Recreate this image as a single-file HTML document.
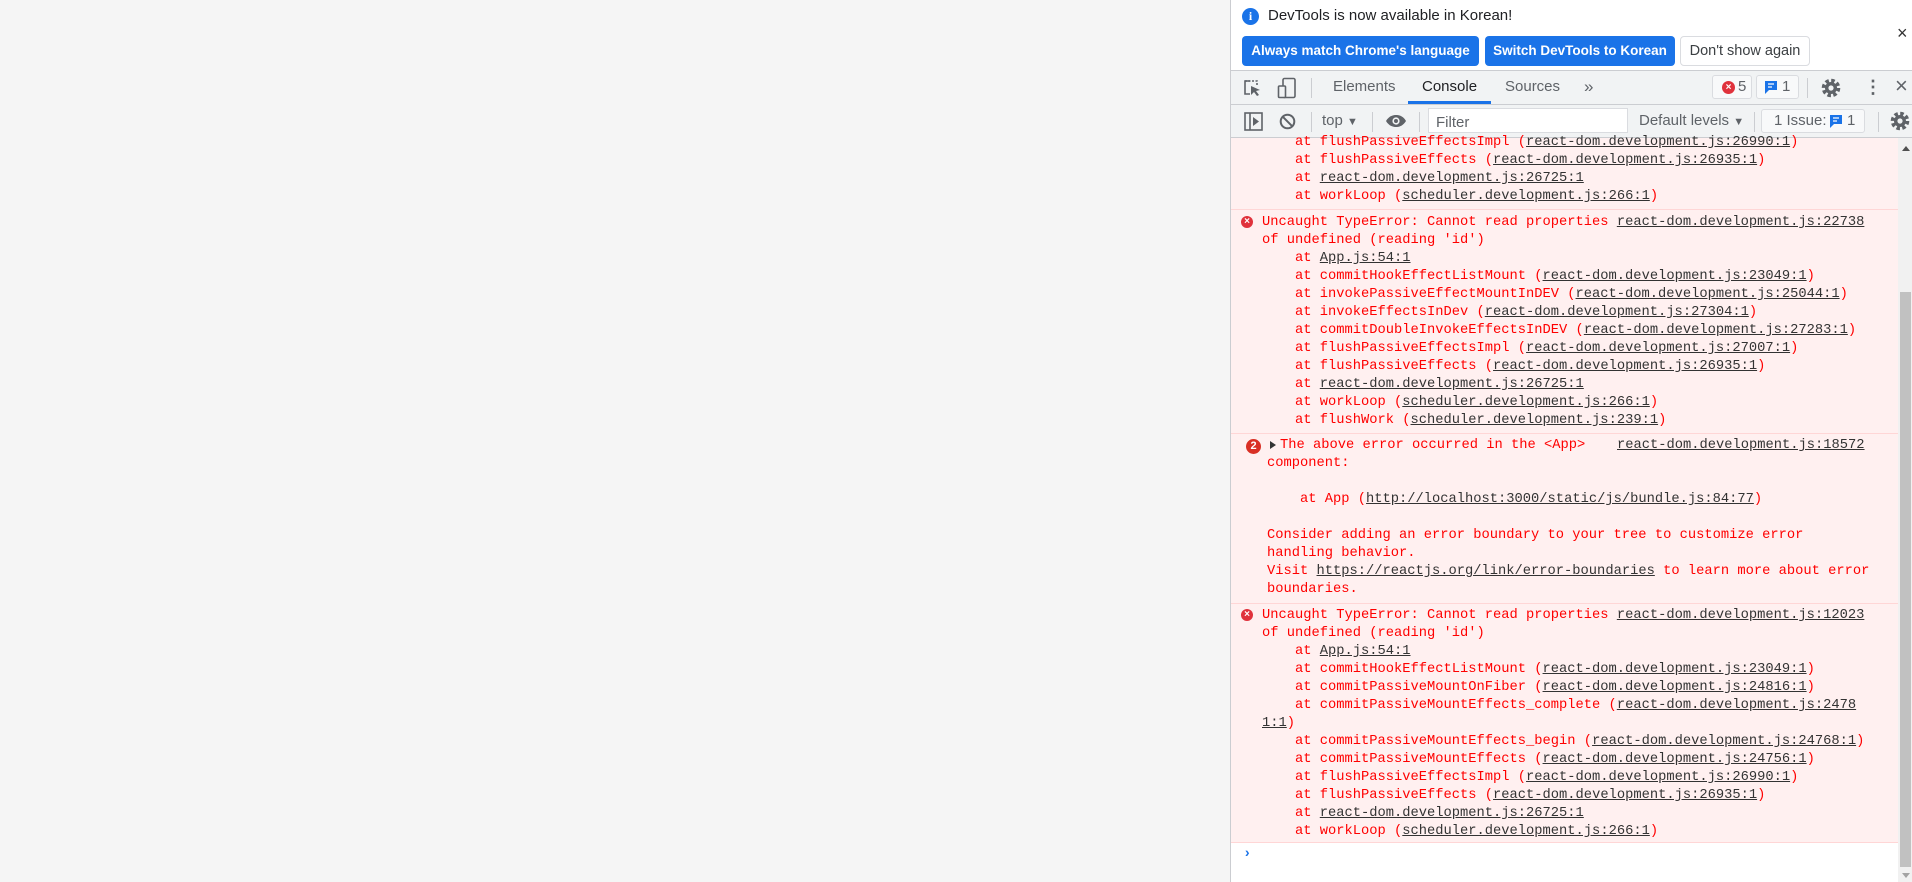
<!DOCTYPE html>
<html><head><meta charset="utf-8">
<style>
*{margin:0;padding:0;box-sizing:border-box}
body{width:1912px;height:882px;position:relative;overflow:hidden;background:#f5f5f5;font-family:"Liberation Sans",sans-serif}
.dt{position:absolute;left:1230px;top:0;width:682px;height:882px;background:#fff;border-left:1px solid #cbcdd1}
.a{position:absolute}
.btn{position:absolute;top:36px;height:30px;border-radius:4px;font-size:13.5px;font-weight:bold;color:#fff;background:#1a73e8;line-height:30px;text-align:center;white-space:nowrap;overflow:hidden}
.tb{position:absolute;left:0;width:682px;background:#f1f3f4;border-bottom:1px solid #cbcdd1}
.sep{position:absolute;width:1px;background:#cbcdd1}
.tab{position:absolute;top:78px;font-size:15px;color:#5f6368;line-height:18px}
.blk{position:absolute;left:0;width:667px;background:#fff0f0;border-top:1px solid #ffd6d6}
.ln{position:absolute;white-space:pre;font-family:"Liberation Mono",monospace;font-size:13.75px;line-height:18px;color:#f00}
.l{color:#333;text-decoration:underline}
.ei{position:absolute;width:12px;height:12px;border-radius:50%;background:#e0323c;color:#fff;font-size:10px;line-height:12px;text-align:center;font-weight:bold}
</style></head><body>
<div class="dt">
 <div class="a" style="left:11px;top:8px;width:17px;height:17px;border-radius:50%;background:#1a73e8;color:#fff;font:bold 12px/17px 'Liberation Serif',serif;text-align:center">i</div>
 <div class="a" style="left:37px;top:7px;font-size:15px;color:#202124;line-height:18px">DevTools is now available in Korean!</div>
 <div class="btn" style="left:11px;width:237px">Always match Chrome's language</div>
 <div class="btn" style="left:254px;width:190px">Switch DevTools to Korean</div>
 <div class="btn" style="left:449px;width:130px;background:#fff;color:#3c4043;font-weight:normal;border:1px solid #dadce0;font-size:14.5px;line-height:28px">Don't show again</div>
 <div class="a" style="left:666px;top:23px;font-size:18px;color:#333">×</div>
 <div class="tb" style="top:70px;height:35px;border-top:1px solid #cbcdd1"></div>
 <svg class="a" style="left:11px;top:78px" width="20" height="20" viewBox="0 0 20 20"><path d="M8 3H3v13h5" fill="none" stroke="#5f6368" stroke-width="1.6"/><path d="M3 3h12v5" fill="none" stroke="#5f6368" stroke-width="1.6" stroke-dasharray="2 1.5"/><path d="M9 8l9 4-4 1 3 4-2 1-3-4-3 3z" fill="#5f6368"/></svg>
 <svg class="a" style="left:46px;top:77px" width="20" height="22" viewBox="0 0 20 22"><rect x="6" y="1.5" width="12" height="19" rx="1.5" fill="none" stroke="#5f6368" stroke-width="1.6"/><rect x="1.5" y="9" width="7" height="11.5" rx="1" fill="#f1f3f4" stroke="#5f6368" stroke-width="1.6"/></svg>
 <div class="sep" style="left:80px;top:78px;height:20px"></div>
 <div class="tab" style="left:102px">Elements</div>
 <div class="tab" style="left:191px;color:#202124">Console</div>
 <div class="a" style="left:177px;top:101px;width:83px;height:3px;background:#1a73e8"></div>
 <div class="tab" style="left:274px">Sources</div>
 <div class="tab" style="left:353px;font-size:17px">»</div>
 <div class="a" style="left:481px;top:75px;width:40px;height:24px;border:1px solid #dadce0;border-radius:3px;background:#f8f9fa"></div>
 <div class="ei" style="left:491px;top:81px;width:13px;height:13px;line-height:13px">×</div>
 <div class="a" style="left:507px;top:78px;font-size:15px;color:#5f6368">5</div>
 <div class="a" style="left:525px;top:75px;width:43px;height:24px;border:1px solid #dadce0;border-radius:3px;background:#f8f9fa"></div>
 <svg class="a" style="left:533px;top:80px" width="14" height="15" viewBox="0 0 14 15"><path d="M1 1h12v9H5l-4 4z" fill="#1a73e8"/><path d="M4 4h6M4 7h4" stroke="#fff" stroke-width="1.3"/></svg>
 <div class="a" style="left:551px;top:78px;font-size:15px;color:#5f6368">1</div>
 <div class="sep" style="left:576px;top:78px;height:20px"></div>
 <svg class="a" style="left:590px;top:78px" width="20" height="20" viewBox="0 0 20 20"><circle cx="10" cy="10" r="7.3" fill="none" stroke="#5f6368" stroke-width="4" stroke-dasharray="3.4 2.33"/><circle cx="10" cy="10" r="6" fill="#5f6368"/><circle cx="10" cy="10" r="2.6" fill="#f1f3f4"/></svg>
 <div class="a" style="left:633px;top:76px;font-size:18px;color:#5f6368;line-height:22px;font-weight:bold">⋮</div>
 <div class="a" style="left:664px;top:75px;font-size:22px;color:#5f6368;line-height:22px">×</div>
 <div class="tb" style="top:105px;height:33px"></div>
 <svg class="a" style="left:13px;top:112px" width="20" height="19" viewBox="0 0 20 19"><rect x="1" y="1" width="17" height="17" fill="none" stroke="#5f6368" stroke-width="1.6"/><path d="M6 1v17" stroke="#5f6368" stroke-width="1.6"/><path d="M9 5l6 4.5-6 4.5z" fill="#5f6368"/></svg>
 <svg class="a" style="left:48px;top:113px" width="17" height="17" viewBox="0 0 17 17"><circle cx="8.5" cy="8.5" r="6.8" fill="none" stroke="#5f6368" stroke-width="2"/><path d="M3.7 3.7l9.6 9.6" stroke="#5f6368" stroke-width="2"/></svg>
 <div class="sep" style="left:80px;top:112px;height:20px"></div>
 <div class="a" style="left:91px;top:112px;font-size:15px;color:#5f6368">top <span style="font-size:11px">▼</span></div>
 <div class="sep" style="left:141px;top:112px;height:20px"></div>
 <svg class="a" style="left:154px;top:114px" width="22" height="14" viewBox="0 0 22 14"><path d="M1 7C4 2 8 1 11 1s7 1 10 6c-3 5-7 6-10 6S4 12 1 7z" fill="#5f6368"/><circle cx="11" cy="7" r="3.6" fill="#f1f3f4"/><circle cx="11" cy="7" r="2" fill="#5f6368"/></svg>
 <div class="sep" style="left:188px;top:112px;height:20px"></div>
 <div class="a" style="left:197px;top:108px;width:200px;height:25px;background:#fff;border:1px solid #dadce0"></div>
 <div class="a" style="left:205px;top:114px;font-size:15px;color:#5f6368">Filter</div>
 <div class="a" style="left:408px;top:112px;font-size:15px;color:#5f6368">Default levels <span style="font-size:11px">▼</span></div>
 <div class="sep" style="left:523px;top:112px;height:20px"></div>
 <div class="a" style="left:530px;top:109px;width:104px;height:24px;border:1px solid #dadce0;border-radius:3px;background:#f8f9fa"></div>
 <div class="a" style="left:543px;top:112px;font-size:15px;color:#5f6368">1 Issue:</div>
 <svg class="a" style="left:598px;top:114px" width="14" height="15" viewBox="0 0 14 15"><path d="M1 1h12v9H5l-4 4z" fill="#1a73e8"/><path d="M4 4h6M4 7h4" stroke="#fff" stroke-width="1.3"/></svg>
 <div class="a" style="left:616px;top:112px;font-size:15px;color:#5f6368">1</div>
 <div class="sep" style="left:647px;top:112px;height:20px"></div>
 <svg class="a" style="left:659px;top:111px" width="20" height="20" viewBox="0 0 20 20"><circle cx="10" cy="10" r="7.3" fill="none" stroke="#5f6368" stroke-width="4" stroke-dasharray="3.4 2.33"/><circle cx="10" cy="10" r="6" fill="#5f6368"/><circle cx="10" cy="10" r="2.6" fill="#f1f3f4"/></svg>

 <div class="blk" style="top:138px;height:71px;border-top:none"></div>
 <div class="blk" style="top:209px;height:224px"></div>
 <div class="blk" style="top:433px;height:170px"></div>
 <div class="blk" style="top:603px;height:240px;border-bottom:1px solid #ffd6d6"></div>

 <div class="ln" style="left:64px;top:134px">at flushPassiveEffectsImpl (<span class="l">react-dom.development.js:26990:1</span>)
at flushPassiveEffects (<span class="l">react-dom.development.js:26935:1</span>)
at <span class="l">react-dom.development.js:26725:1</span>
at workLoop (<span class="l">scheduler.development.js:266:1</span>)</div>

 <div class="ei" style="left:10px;top:216px">×</div>
 <div class="ln" style="left:31px;top:214px">Uncaught TypeError: Cannot read properties <span class="l">react-dom.development.js:22738</span>
of undefined (reading 'id')</div>
 <div class="ln" style="left:64px;top:250px">at <span class="l">App.js:54:1</span>
at commitHookEffectListMount (<span class="l">react-dom.development.js:23049:1</span>)
at invokePassiveEffectMountInDEV (<span class="l">react-dom.development.js:25044:1</span>)
at invokeEffectsInDev (<span class="l">react-dom.development.js:27304:1</span>)
at commitDoubleInvokeEffectsInDEV (<span class="l">react-dom.development.js:27283:1</span>)
at flushPassiveEffectsImpl (<span class="l">react-dom.development.js:27007:1</span>)
at flushPassiveEffects (<span class="l">react-dom.development.js:26935:1</span>)
at <span class="l">react-dom.development.js:26725:1</span>
at workLoop (<span class="l">scheduler.development.js:266:1</span>)
at flushWork (<span class="l">scheduler.development.js:239:1</span>)</div>

 <div class="a" style="left:15px;top:439px;width:15px;height:15px;border-radius:50%;background:#d93025;color:#fff;font:bold 11px/15px 'Liberation Sans',sans-serif;text-align:center">2</div>
 <div class="a" style="left:39px;top:441px;width:0;height:0;border-left:6px solid #333;border-top:4px solid transparent;border-bottom:4px solid transparent"></div>
 <div class="ln" style="left:49px;top:437px">The above error occurred in the &lt;App&gt;</div>
 <div class="ln" style="left:386px;top:437px"><span class="l">react-dom.development.js:18572</span></div>
 <div class="ln" style="left:36px;top:455px">component:

    at App (<span class="l">http://localhost:3000/static/js/bundle.js:84:77</span>)

Consider adding an error boundary to your tree to customize error
handling behavior.
Visit <span class="l">https://reactjs.org/link/error-boundaries</span> to learn more about error
boundaries.</div>

 <div class="ei" style="left:10px;top:609px">×</div>
 <div class="ln" style="left:31px;top:607px">Uncaught TypeError: Cannot read properties <span class="l">react-dom.development.js:12023</span>
of undefined (reading 'id')</div>
 <div class="ln" style="left:64px;top:643px">at <span class="l">App.js:54:1</span>
at commitHookEffectListMount (<span class="l">react-dom.development.js:23049:1</span>)
at commitPassiveMountOnFiber (<span class="l">react-dom.development.js:24816:1</span>)
at commitPassiveMountEffects_complete (<span class="l">react-dom.development.js:2478</span></div>
 <div class="ln" style="left:31px;top:715px"><span class="l">1:1</span>)</div>
 <div class="ln" style="left:64px;top:733px">at commitPassiveMountEffects_begin (<span class="l">react-dom.development.js:24768:1</span>)
at commitPassiveMountEffects (<span class="l">react-dom.development.js:24756:1</span>)
at flushPassiveEffectsImpl (<span class="l">react-dom.development.js:26990:1</span>)
at flushPassiveEffects (<span class="l">react-dom.development.js:26935:1</span>)
at <span class="l">react-dom.development.js:26725:1</span>
at workLoop (<span class="l">scheduler.development.js:266:1</span>)</div>

 <div class="a" style="left:12px;top:845px;color:#1a73e8;font:bold 14px/18px 'Liberation Mono',monospace">›</div>

 <div class="a" style="left:667px;top:138px;width:15px;height:744px;background:#f1f1f1"></div>
 <div class="a" style="left:671px;top:146px;width:0;height:0;border-bottom:5px solid #505050;border-left:4px solid transparent;border-right:4px solid transparent"></div>
 <div class="a" style="left:669px;top:292px;width:11px;height:575px;background:#c1c1c1"></div>
 <div class="a" style="left:671px;top:873px;width:0;height:0;border-top:5px solid #a3a3a3;border-left:4px solid transparent;border-right:4px solid transparent"></div>
</div>
</body></html>
